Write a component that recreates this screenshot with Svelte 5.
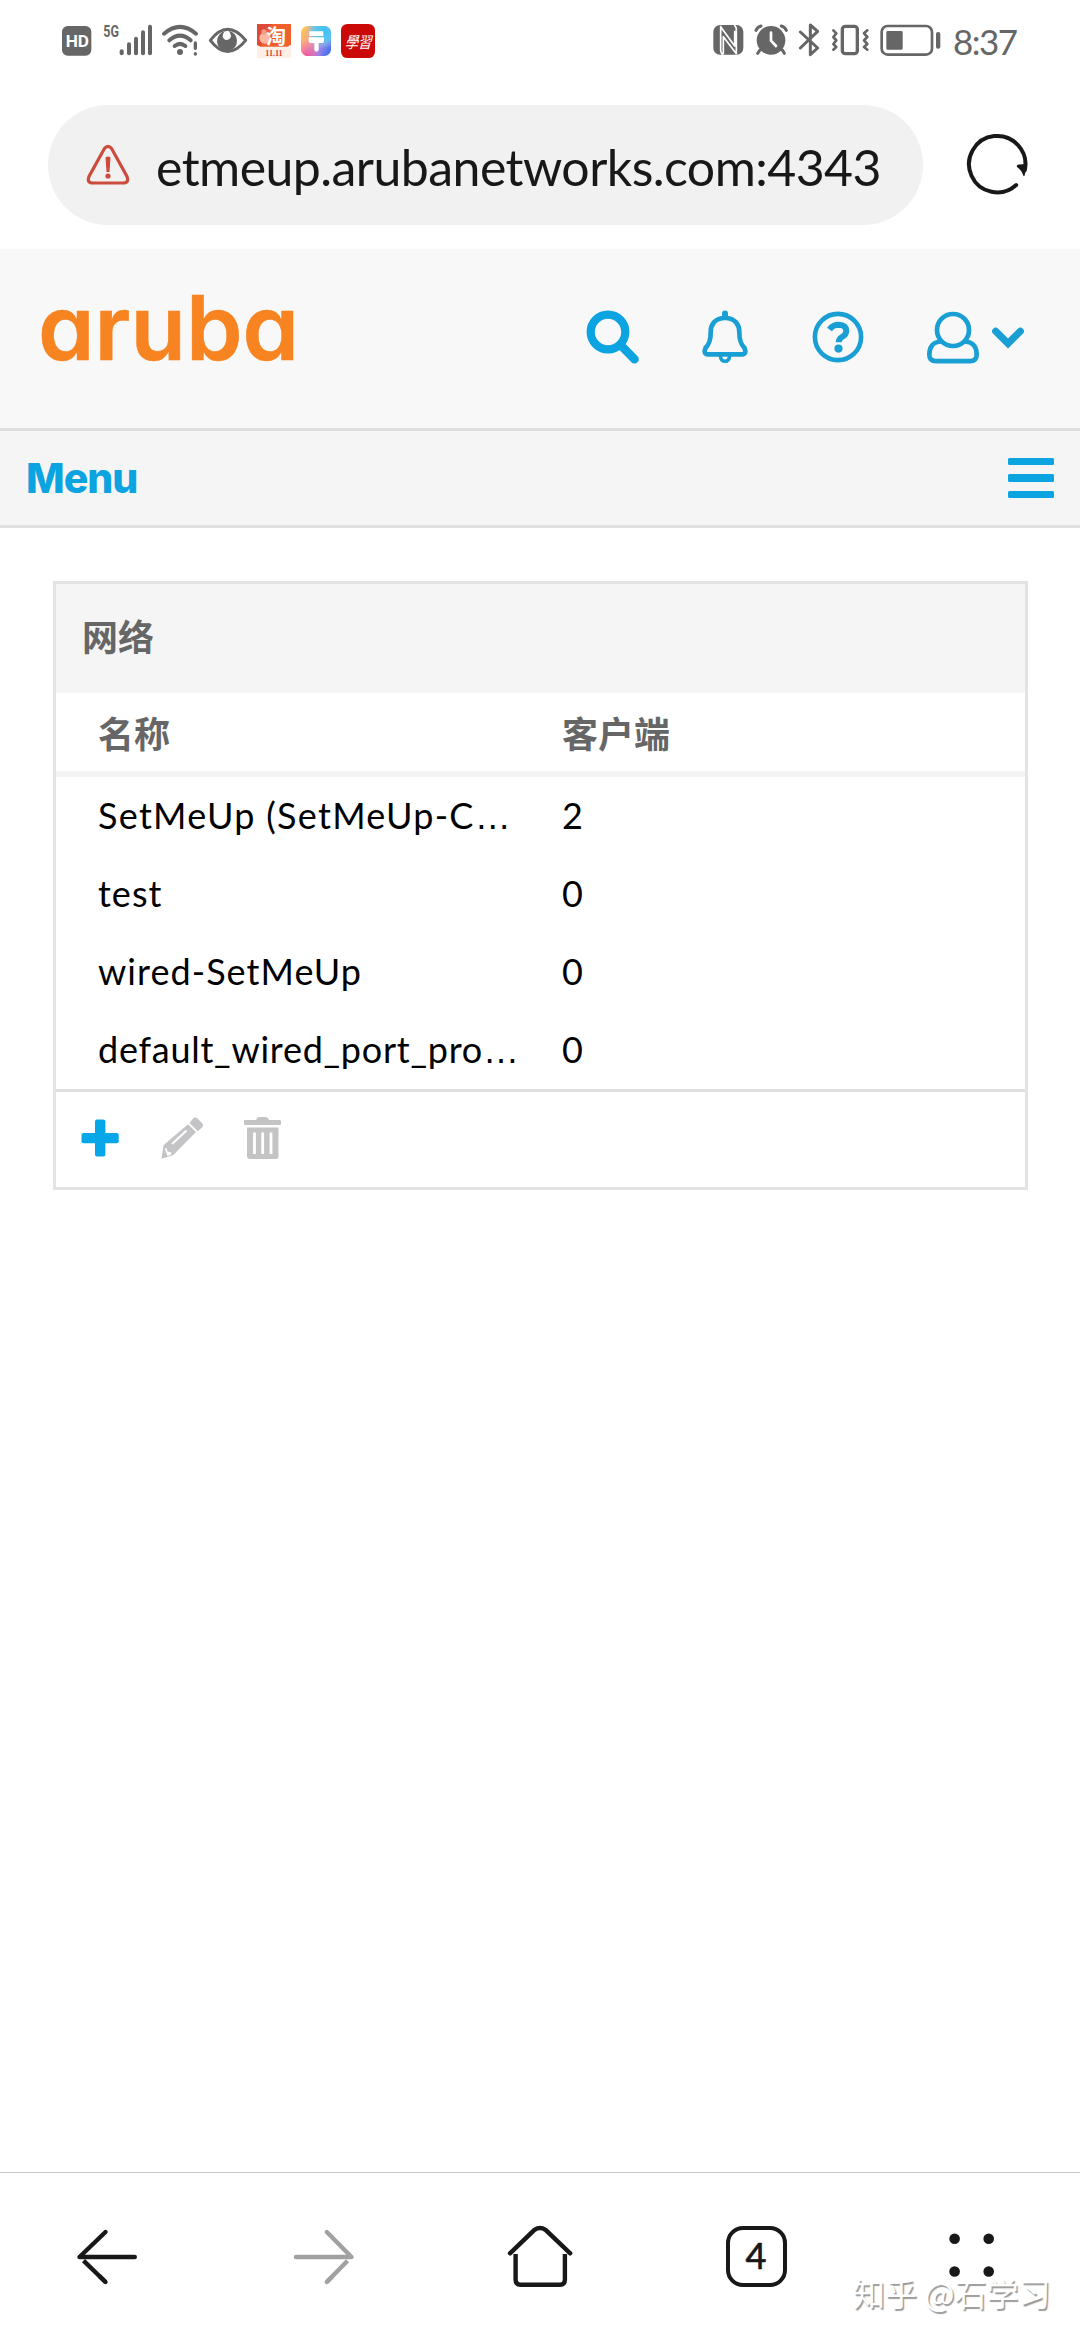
<script>
  const networks = [
    { name: 'SetMeUp (SetMeUp-C', cut: true, clients: 2 },
    { name: 'test', cut: false, clients: 0 },
    { name: 'wired-SetMeUp', cut: false, clients: 0 },
    { name: 'default_wired_port_pro', cut: true, clients: 0 }
  ];
  const bars = [
    { x: 215, top: 124 },
    { x: 237, top: 103 },
    { x: 258, top: 86 },
    { x: 279, top: 67 },
    { x: 300, top: 50 }
  ];
</script>

<div class="screen">
  <header class="status">
    <div class="status-group">
      <svg viewBox="36 42 90 102" width="30" height="34">
        <rect x="36" y="48" width="88" height="89" rx="17" fill="#666" />
        <text x="47" y="110" class="hd" textLength="70" lengthAdjust="spacingAndGlyphs">HD</text>
      </svg>
      <svg viewBox="156 42 153 102" width="51" height="34">
        <text x="160" y="82" class="fiveg" textLength="47" lengthAdjust="spacingAndGlyphs">5G</text>
        {#each bars as b}
          <line x1={b.x} y1={b.top} x2={b.x} y2="130" stroke="#666" stroke-width="12" stroke-linecap="round" />
        {/each}
      </svg>
      <svg viewBox="339 42 108 102" width="36" height="34" fill="none" stroke="#666" stroke-width="12" stroke-linecap="round">
        <path d="M342 71Q390 30 438 71M358 91Q390 63 422 91M374 108Q390 95 406 108" />
        <circle cx="390" cy="126" r="9" fill="#666" stroke="none" />
        <path d="M436 99V115M436 131V132" stroke-width="10" />
      </svg>
      <svg viewBox="477 42 114 102" width="38" height="34">
        <path d="M481 91Q532 25 587 91Q532 158 481 91Z" fill="none" stroke="#666" stroke-width="9" stroke-linejoin="round" />
        <path d="M527 63A30 30 0 1 0 561 92A30 30 0 0 0 536 62Q549 78 537 88Q524 94 518 80Q518 68 527 63Z" fill="#666" />
      </svg>
      <svg viewBox="621 42 102 102" width="34" height="34">
        <rect x="621" y="42" width="102" height="102" fill="#fdeee6" />
        <path d="M621 42H723V104L712 110H633L621 104Z" fill="#f0602c" />
        <path d="M621 42H665L640 75L633 110L621 104Z" fill="#dd4a38" />
        <circle cx="645" cy="84" r="17" fill="#fbb7a0" />
        <circle cx="642" cy="66" r="8" fill="#f79a86" />
        <text x="648" y="102" class="tao">淘</text>
        <text x="646" y="138" class="sale" textLength="52" lengthAdjust="spacingAndGlyphs">11.11</text>
      </svg>
      <svg viewBox="753 42 90 102" width="30" height="34">
        <defs>
          <linearGradient id="paint" x1="0" y1="0.2" x2="1" y2="0.8">
            <stop offset="0" stop-color="#ffc557" />
            <stop offset="0.35" stop-color="#f9a08a" />
            <stop offset="0.7" stop-color="#9a86ee" />
            <stop offset="1" stop-color="#3f70f0" />
          </linearGradient>
          <radialGradient id="sky" cx="0.75" cy="0.15" r="0.6">
            <stop offset="0" stop-color="#37c3f4" />
            <stop offset="0.55" stop-color="#58c9ee" stop-opacity="0.9" />
            <stop offset="1" stop-color="#8fd0d8" stop-opacity="0" />
          </radialGradient>
          <radialGradient id="rose" cx="0.2" cy="1" r="0.55">
            <stop offset="0" stop-color="#f2509c" />
            <stop offset="1" stop-color="#e87dc0" stop-opacity="0" />
          </radialGradient>
        </defs>
        <rect x="753" y="48" width="90" height="90" rx="20" fill="url(#paint)" />
        <rect x="753" y="48" width="90" height="90" rx="20" fill="url(#sky)" />
        <rect x="753" y="48" width="90" height="90" rx="20" fill="url(#rose)" />
        <path d="M778 64H820V78H778ZM776 82H822V92Q822 99 814 99H806V118Q806 125 799 125Q793 125 793 118V99H784Q776 99 776 92Z" fill="#fff" />
      </svg>
      <svg viewBox="873 42 102 102" width="34" height="34">
        <rect x="873" y="42" width="102" height="102" rx="19" fill="#cb0a08" />
        <g transform="translate(884 114) skewX(-14) scale(1 1.2)">
          <text x="0" y="0" class="xuexi">學習</text>
        </g>
      </svg>
    </div>

    <div class="status-group right">
      <svg viewBox="39 42 90 102" width="30" height="34">
        <rect x="40" y="45" width="90" height="89" rx="20" fill="#666" />
        <path d="M62 47V122Q63 131 70 134M62 50L104 108V62M70 132V80L109 131V56Q108 49 102 46" fill="none" stroke="#fff" stroke-width="5" stroke-linejoin="round" />
      </svg>
      <svg viewBox="165 42 99 102" width="33" height="34">
        <circle cx="213" cy="91" r="43" fill="#666" />
        <path d="M168 61Q172 51 183 48M244 48Q255 51 259 61M180 120L173 130M247 120L253 130" fill="none" stroke="#666" stroke-width="9" stroke-linecap="round" />
        <path d="M213 68V92L228 108" fill="none" stroke="#fff" stroke-width="8" stroke-linecap="round" stroke-linejoin="round" />
      </svg>
      <svg viewBox="300 42 60 102" width="20" height="34">
        <path d="M301 66L353 114L331 134V45L353 64L301 114" fill="none" stroke="#666" stroke-width="9" stroke-linecap="round" stroke-linejoin="round" />
      </svg>
      <svg viewBox="396 42 111 102" width="37" height="34" fill="none" stroke="#666" stroke-linecap="round" stroke-linejoin="round">
        <rect x="427" y="49" width="45" height="82" rx="9" stroke-width="10" />
        <path d="M400 61L409 70L400 81L409 91L400 102L409 111L400 119M502 61L492 70L502 81L492 91L502 102L492 111L502 119" stroke-width="8" />
      </svg>
      <svg viewBox="543 42 180 102" width="60" height="34">
        <rect x="545" y="48" width="151" height="86" rx="18" fill="none" stroke="#666" stroke-width="8" />
        <rect x="559" y="63" width="49" height="56" rx="4" fill="#666" />
        <rect x="708" y="66" width="13" height="50" rx="6" fill="#666" />
      </svg>
      <span class="time">8:37</span>
    </div>
  </header>

  <div class="browser">
    <div class="pill">
      <svg class="warn" viewBox="0 0 44 40" width="44" height="40" fill="none" stroke="#cc4b3c">
        <path d="M18.4 3.6Q22 -0.8 25.6 3.6L41 31.5Q43.500 38 37 38H7Q0.500 38 3 31.500Z" stroke-width="3.200" />
        <path d="M19.500 12.500Q22 10.600 24.500 12.500L23.500 27H20.500Z" fill="#cc4b3c" stroke="none" />
        <circle cx="22" cy="31" r="2.600" fill="#cc4b3c" stroke="none" />
      </svg>
      <span class="url">etmeup.arubanetworks.com:4343</span>
    </div>
    <svg class="reload" viewBox="0 0 62 62" width="62" height="62">
      <path d="M50.200 51A28.200 28.200 0 1 1 58.800 36" fill="none" stroke="#181818" stroke-width="4" stroke-linecap="round" />
      <path d="M51 33Q50 31 53 30.500L60.500 30V34L58.600 41.500Q57.800 43 57 41Q55.500 36 51 33Z" fill="#181818" />
    </svg>
  </div>

  <div class="appbar">
    <svg class="logo" viewBox="0 0 254 66" width="254" height="66">
      <text x="-3" y="65" textLength="261" lengthAdjust="spacingAndGlyphs">aruba</text>
    </svg>
    <div class="tools">
      <svg class="search" viewBox="0 0 54 54" width="54" height="54">
        <circle cx="22" cy="22" r="17.300" fill="none" stroke="#0ba3e0" stroke-width="8.200" />
        <path d="M36.500 37L48.500 49.200" stroke="#0ba3e0" stroke-width="8.600" stroke-linecap="round" />
      </svg>
      <svg class="bell" viewBox="0 0 46 54" width="46" height="54" fill="none" stroke="#1a9fd4">
        <path d="M23 8C12.500 8 8.700 15 8.700 22C8.700 31 7 34.500 3.500 38Q1 44 6 44.300H40Q45 44 42.500 38C39 34.500 37.300 31 37.300 22C37.300 15 33.500 8 23 8Z" stroke-width="4.700" stroke-linejoin="round" />
        <path d="M23 7V3.500" stroke-width="6" stroke-linecap="round" />
        <path d="M18.300 46C19 53 27 53 27.700 46" stroke-width="3.500" />
      </svg>
      <svg class="help" viewBox="0 0 52 52" width="52" height="52">
        <circle cx="26" cy="26" r="23.100" fill="none" stroke="#1a9fd4" stroke-width="4.600" />
        <path d="M17.500 18.500Q21 13.800 26.500 13.800Q34.300 14 34.300 20Q34.300 23.500 30 26Q26.700 28 26.700 31.200" fill="none" stroke="#1a9fd4" stroke-width="6" />
        <circle cx="26.500" cy="37.600" r="4.100" fill="#1a9fd4" />
      </svg>
      <div class="account">
        <svg viewBox="0 0 54 54" width="54" height="54" fill="none" stroke="#1a9fd4" stroke-width="4.700">
          <circle cx="27" cy="20" r="16" />
          <path d="M15.500 31.500C7 31.500 3.300 37 3.300 44.500C3.300 49 5.500 51.200 10 51.200H44C48.500 51.200 50.700 49 50.700 44.500C50.700 37 47 31.500 38.500 31.500" />
        </svg>
        <svg viewBox="0 0 34 24" width="34" height="24">
          <path d="M4.700 6.200L17 18.500L29.300 6.200" fill="none" stroke="#1a9fd4" stroke-width="7.200" stroke-linecap="round" stroke-linejoin="miter" />
        </svg>
      </div>
    </div>
  </div>

  <div class="menubar">
    <span>Menu</span>
    <div class="burger"><i></i><i></i><i></i></div>
  </div>

  <main class="card">
    <h2>网络</h2>
    <div class="row head"><span>名称</span><span>客户端</span></div>
    {#each networks as n}
      <div class="row">
        <span class="name">{n.name}{#if n.cut}<span class="dots">…</span>{/if}</span>
        <span>{n.clients}</span>
      </div>
    {/each}
    <div class="actions">
      <svg viewBox="0 0 38 38" width="38" height="38" fill="#05a7e8">
        <rect x="14" y="0.500" width="10.400" height="37" rx="2" />
        <rect x="0.500" y="14" width="37.200" height="10.300" rx="2" />
      </svg>
      <svg viewBox="0 0 42 42" width="42" height="42" fill="#c4c4c6">
        <path d="M27 7.500L35 15.200L12 38.500L0.500 42L2.500 28.500Z" transform="translate(0 -0.300)" />
        <path d="M28.500 6L32.200 1.500Q34 -0.500 36.500 1.500L41 6Q43 8.500 41 10.500L36.800 14.300Z" />
        <path d="M11 27L25.500 13.500" stroke="#fff" stroke-width="2" />
        <path d="M3.800 31.500L5.500 31L6.500 34.500L10.500 35.500L10 37.800L6.500 39Z" fill="#fff" />
      </svg>
      <svg viewBox="0 0 37 42" width="37" height="42" fill="#c4c4c4">
        <path d="M1 3H12Q13 0 15 0H22Q24 0 25 3H36Q37 3 37 4V7Q37 8 36 8H1Q0 8 0 7V4Q0 3 1 3Z" />
        <path d="M3 10.500H34.500V39Q34.500 42 31.500 42H6Q3 42 3 39Z" />
        <path d="M10.500 15.500V37M18.700 15.500V37M27 15.500V37" stroke="#fff" stroke-width="2.800" />
      </svg>
    </div>
  </main>

  <nav class="nav">
    <svg viewBox="76 2225 64 64" width="64" height="64" fill="none" stroke="#181818" stroke-width="4.400" stroke-linecap="round">
      <path d="M134.800 2257H79.500L105.500 2232" stroke-linejoin="round" />
      <path d="M105.500 2282L83.500 2260.700" stroke-linecap="butt" /><path d="M105.500 2282L100 2276.700" />
    </svg>
    <svg viewBox="292 2225 64 64" width="64" height="64" fill="none" stroke="#a1a1a1" stroke-width="4.400" stroke-linecap="round">
      <path d="M296 2257H351.500L326.800 2232" stroke-linejoin="round" />
      <path d="M326.800 2282L347.500 2260.700" stroke-linecap="butt" /><path d="M326.800 2282L332 2276.700" />
    </svg>
    <svg viewBox="508 2225 64 64" width="64" height="64" fill="none" stroke="#181818" stroke-width="4.400" stroke-linecap="round">
      <path d="M510 2253.300L534.500 2229.800Q540 2226.200 545.500 2229.800L570.200 2253.300" />
      <path d="M515.600 2254V2279.500Q515.600 2284.700 520.500 2284.700H560Q564.900 2284.700 564.900 2279.500V2254" stroke-linecap="butt" />
    </svg>
    <div class="tabs">4</div>
    <svg viewBox="940 2225 64 64" width="64" height="64" fill="#181818">
      <circle cx="954.600" cy="2238.700" r="5.300" /><circle cx="988.700" cy="2238.700" r="5.300" />
      <circle cx="954.600" cy="2271.500" r="5.300" /><circle cx="988.700" cy="2271.500" r="5.300" />
    </svg>
    <span class="mark">知乎 @石学习</span>
  </nav>
</div>

<style>
  :global(body) { background: #fff; }
  .screen {
    width: 1080px; height: 2340px; background: #fff; overflow: hidden;
    display: flex; flex-direction: column; box-sizing: border-box;
    font-family: Lato, "Noto Sans CJK SC", sans-serif; color: #000;
  }
  svg { display: block; flex: none; overflow: visible; }
  .status { height: 82px; flex: none; display: flex; justify-content: space-between; align-items: center; padding: 0 62px; box-sizing: border-box; }
  .status-group { display: flex; gap: 10px; align-items: center; }
  .status-group.right { gap: 12px; }
  .time { font-size: 35px; line-height: 34px; width: 65px; color: #666; letter-spacing: -1.5px; white-space: nowrap; }
  .hd { font: 700 48px Roboto, sans-serif; fill: #fff; }
  .fiveg { font: 700 50px Roboto, sans-serif; fill: #666; }
  .tao { font: 700 60px "Noto Sans CJK SC", sans-serif; fill: #fff; }
  .sale { font: 700 25px "Liberation Serif", serif; fill: #d8402e; }
  .xuexi { font: 400 40px "Noto Sans CJK TC", sans-serif; fill: #fff; }

  .browser { height: 167px; flex: none; box-sizing: border-box; padding: 23px 0 0 48px; display: flex; }
  .pill { width: 875px; height: 120px; border-radius: 60px; background: #f1f1f1; display: flex; align-items: center; box-sizing: border-box; padding-left: 38px; }
  .url { margin-left: 26px; font-size: 50px; line-height: 60px; color: #181818; white-space: nowrap; padding-top: 3px; letter-spacing: -0.55px; }
  .reload { margin: 29px 0 0 42.5px; }

  .appbar { height: 182px; flex: none; box-sizing: border-box; background: #f8f8f8; border-bottom: 3px solid #dedede; display: flex; align-items: flex-start; justify-content: space-between; padding: 46px 55px 0 41px; }
  .logo text { font: 600 90px Inter, sans-serif; font-feature-settings: "cv11"; fill: #f78420; stroke: #f78420; stroke-width: 0.5px; }
  .tools { display: flex; padding-top: 15px; align-items: center; }
  .bell { margin-left: 62px; }
  .help { margin-left: 64px; }
  .account { display: flex; align-items: center; gap: 11px; margin-left: 62px; }

  .menubar { height: 97px; flex: none; box-sizing: border-box; background: #f5f5f5; border-bottom: 3px solid #dfdfdf; display: flex; align-items: center; justify-content: space-between; padding: 0 26px; color: #0ba3e0; font-family: Inter, sans-serif; font-weight: 800; font-size: 41px; letter-spacing: -1px; }
  .burger { display: flex; flex-direction: column; gap: 9px; width: 46px; }
  .burger i { height: 7.6px; border-radius: 1.5px; background: #0ba3e0; }

  .card { margin: 53px 52px 0 53px; flex: none; border: 3px solid #e3e3e3; }
  h2 { margin: 0; height: 109px; background: #f5f5f5; padding: 0 26px; font-size: 36px; line-height: 106px; font-weight: 700; color: #666; }
  .row { display: grid; grid-template-columns: 464px 1fr; padding-left: 42px; height: 78px; line-height: 76px; font-size: 36px; white-space: nowrap; }
  .row.head { line-height: 82px; font-weight: 700; color: #666; border-bottom: 6px solid #f3f3f3; box-sizing: border-box; height: 84px; }
  .name { letter-spacing: 1.05px; }
  .row:nth-child(3) .name { letter-spacing: 1.3px; }
  .row:nth-child(6) .name { letter-spacing: 0.75px; }
  .dots { font-family: "Liberation Sans", sans-serif; line-height: 1; }
  .actions { height: 92px; border-top: 3px solid #e0e0e0; display: flex; align-items: center; gap: 41.5px; padding: 0 0 3px 25px; }

  .nav { margin-top: auto; height: 168px; flex: none; box-sizing: border-box; border-top: 1px solid #c8c8c8; padding-top: 52px; display: grid; grid-template-columns: repeat(5, 1fr); justify-items: center; align-items: start; position: relative; }
  .tabs { width: 61px; height: 61px; margin-top: 1px; border: 4.400px solid #181818; border-radius: 17px; box-sizing: border-box; font-size: 36px; font-weight: 400; -webkit-text-stroke: 0.7px #181818; line-height: 51px; text-align: center; color: #181818; }
  .mark { position: absolute; left: 853px; top: 96px; font-size: 32px; line-height: 46px; color: #fff; text-shadow: 1.500px 1.500px 1px #999; white-space: nowrap; font-family: "Noto Sans CJK SC", sans-serif; }
</style>
